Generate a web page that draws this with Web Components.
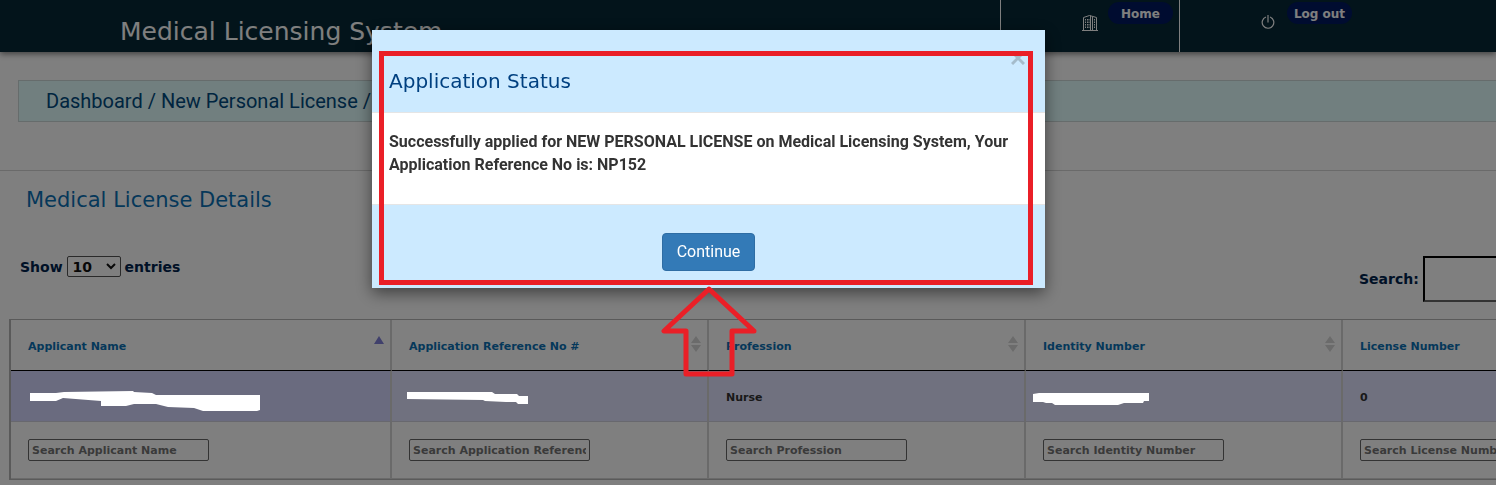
<!DOCTYPE html>
<html lang="en">
<head>
<meta charset="utf-8">
<title>Medical Licensing System</title>
<style>
    body {
        margin: 0;
        background: #fff;
        font-family: "DejaVu Sans", Verdana, sans-serif;
        overflow: hidden;
    }
</style>
</head>
<body>
<app-header heading="Medical Licensing System">
    <nav-item icon="building" href="#home">Home</nav-item>
    <nav-item icon="power" href="#logout">Log out</nav-item>
</app-header>
<bread-crumb>Dashboard / New Personal License /</bread-crumb>
<license-panel heading="Medical License Details">
    <table-toolbar></table-toolbar>
    <license-table></license-table>
</license-panel>
<status-modal heading="Application Status" action="Continue">
    Successfully applied for NEW PERSONAL LICENSE on Medical Licensing System, Your Application Reference No is: NP152
</status-modal>

<script>
class BaseElement extends HTMLElement {
    connectedCallback() {
        if(this.shadowRoot) return
        this.attachShadow({mode: "open"})
        const template = document.createElement("template")
        template.innerHTML = `<style>* { box-sizing: border-box; } ${this.getStyles()}</style>${this.getMarkup()}`
        this.shadowRoot.appendChild(template.content.cloneNode(true))
    }
    attr(name) {
        return this.getAttribute(name) || ""
    }
}

class AppHeader extends BaseElement {
    getMarkup() {
        return `
        <header>
            <h1>${this.attr("heading")}</h1>
            <nav><slot></slot></nav>
        </header>
        `
    }
    getStyles() {
        return `
        :host { display: block; }
        header {
            display: flex;
            justify-content: space-between;
            height: 52px;
            background: #062836;
            box-shadow: 0 2px 6px rgba(0, 0, 0, .5);
        }
        h1 {
            margin: 0;
            padding: 16px 0 0 120px;
            font-size: 25px;
            line-height: 32px;
            font-weight: 400;
            color: #fff;
            white-space: nowrap;
        }
        nav { display: flex; }
        ::slotted(nav-item) { width: 179px; border-left: 1px solid #fff; }
        ::slotted(nav-item:last-child) { width: 317px; }
        `
    }
}

const icons = {
    building: `<svg width="16" height="17" viewBox="0 0 16 17" fill="none" stroke="#fff">
        <path d="M0 16.500h16M1.500 16.500V3.500l6-2 7 2v13M8.500 1.500v15M10.500 2.500v14" />
        <path d="M3.500 5v9M5.500 5v9M7 5v9M12.500 5v9" stroke-dasharray="1.500 1" />
    </svg>`,
    power: `<svg width="14" height="16" viewBox="0 0 14 16" fill="none" stroke="#fff" stroke-width="1.200">
        <path d="M5 3a5.800 5.800 0 1 0 4 0M7 1v7.500"/>
    </svg>`
}

class NavItem extends BaseElement {
    getMarkup() {
        return `<a href="${this.attr("href")}">${icons[this.attr("icon")]}<span><slot></slot></span></a>`
    }
    getStyles() {
        return `
        :host { display: block; box-sizing: border-box; }
        a {
            display: grid;
            grid-template-columns: 26px 65px;
            padding: 2px 0 0 81px;
            text-decoration: none;
        }
        svg { margin-top: 12px; }
        span {
            height: 22px;
            border-radius: 11px;
            background: #001860;
            color: #fff;
            font-size: 12px;
            line-height: 24px;
            font-weight: 700;
            text-align: center;
            white-space: nowrap;
        }
        `
    }
}

class BreadCrumb extends BaseElement {
    getMarkup() {
        return `<nav><slot></slot></nav>`
    }
    getStyles() {
        return `
        :host {
            display: block;
            padding: 28px 0 48px 18px;
            border-bottom: 1px solid #d4d4d4;
        }
        nav {
            padding: 0 27px;
            border: 1px solid #ccd8d8;
            border-right: 0;
            background: #e2fefe;
            font-family: Roboto, sans-serif;
            font-size: 20px;
            line-height: 40px;
            color: #004a80;
        }
        `
    }
}

class LicensePanel extends BaseElement {
    getMarkup() {
        return `<h2>${this.attr("heading")}</h2><slot></slot>`
    }
    getStyles() {
        return `
        :host { display: block; padding-left: 9px; overflow: hidden; }
        h2 {
            margin: 0;
            padding: 14px 17px 40px;
            font-size: 21px;
            line-height: 31px;
            font-weight: 400;
            color: #0a70b4;
        }
        `
    }
}

class TableToolbar extends BaseElement {
    getMarkup() {
        return `
        <label class="length">Show
            <span class="pick">
                <select><option>10</option><option>25</option></select>
                <svg width="10" height="7" viewBox="0 0 10 7" fill="none" stroke="#111" stroke-width="2"><path d="M1 1l4 4 4-4"/></svg>
            </span>
            entries
        </label>
        <label class="search">Search: <input type="search"></label>
        `
    }
    getStyles() {
        return `
        :host {
            display: flex;
            justify-content: space-between;
            align-items: flex-start;
            width: 1650px;
            padding-left: 11px;
            margin-bottom: 17px;
            box-sizing: border-box;
            font-size: 14px;
            font-weight: 700;
            color: #00224d;
        }
        label { display: flex; align-items: center; }
        .length { gap: 4px; }
        .search { gap: 4px; width: 300px; }
        .pick { display: grid; align-items: center; }
        select, .pick svg { grid-area: 1 / 1; }
        .pick svg { justify-self: end; margin-right: 5px; pointer-events: none; }
        select {
            appearance: none;
            width: 54px;
            height: 21px;
            padding: 0 5px;
            border: 1px solid #555;
            border-radius: 2px;
            background: #fff;
            font: inherit;
            color: #111;
        }
        .search input {
            flex: 1;
            min-width: 0;
            height: 46px;
            border: 2px inset #666;
            border-color: #222 #666 #666 #222;
            background: #fff;
        }
        `
    }
}

class LicenseTable extends BaseElement {
    getMarkup() {
        const columns = ["Applicant Name", "Application Reference No #", "Profession", "Identity Number", "License Number"]
        const row = [
            this.getMark("M2 3 28 3 36 2 105 1 106 2 124 3 128 5 232 5 232 20 229 21 175 21 166 18 140 17 128 14 106 14 98 16 73 16 73 11 35 8 28 11 2 11z"),
            this.getMark("M-2 2 83 2 86 4 108 4 110 6 119 6 119 14 109 14 107 12 97 12 76 11 74 10-2 9z"),
            "Nurse",
            this.getMark("M-10 4-4 3 106 3 106 11 101 11 100 13 81 13 75 15 12 15 9 13 3 13 0 12-10 12z"),
            "0"
        ]
        return `
        <table>
            <colgroup><col class="name"><col><col><col><col></colgroup>
            <thead><tr>${columns.map((name, i) => `<th scope="col"><div><span>${name}</span>${this.getArrows(i === 0)}</div></th>`).join("")}</tr></thead>
            <tbody><tr>${row.map(cell => `<td>${cell}</td>`).join("")}</tr></tbody>
            <tfoot><tr>${columns.map(name => `<td><input type="text" aria-label="Search ${name}" placeholder="Search ${name}"></td>`).join("")}</tr></tfoot>
        </table>
        `
    }
    getArrows(sorted) {
        if(sorted) {
            return `<svg width="10" height="18" viewBox="0 0 10 18"><path d="M0 9 5 1l5 8z" fill="#8080d8"/></svg>`
        }
        return `<svg width="10" height="18" viewBox="0 0 10 18" fill="#d6d6d6"><path d="M0 8 5 1l5 7zM0 10h10l-5 7z"/></svg>`
    }
    // brush stroke that hides a private value
    getMark(path) {
        return `<svg class="mark" width="240" height="14" viewBox="0 0 240 14"><path d="${path}" fill="#fff"/></svg>`
    }
    getStyles() {
        return `
        :host { display: block; }
        table {
            table-layout: fixed;
            width: 1650px;
            border: 1px solid #b4b4b4;
            border-left-width: 2px;
            border-spacing: 0;
            font-size: 11px;
            font-weight: 700;
        }
        col { width: 317px; }
        col.name { width: 381px; }
        th, td {
            padding: 0 17px;
            border-right: 2px solid #d4d4d4;
            text-align: left;
        }
        th {
            height: 51px;
            padding: 2px 6px 0 17px;
            border-bottom: 1px solid #000;
            color: #0a70b4;
        }
        th div { display: flex; align-items: center; justify-content: space-between; }
        th svg { margin-bottom: 4px; }
        tbody td {
            height: 51px;
            padding-top: 2px;
            background: #e0e2ff;
            border-bottom: 1px solid #d0d0dd;
            color: #333;
        }
        tbody td:first-child { background: #d4d6ff; }
        tfoot td { height: 57px; border-bottom: 1px solid #d4d4d4; }
        .mark {
            display: block;
            position: relative;
            z-index: 20;
            overflow: visible;
        }
        input {
            display: block;
            width: 181px;
            height: 22px;
            padding: 0 3px;
            border: 1px solid #666;
            border-radius: 2px;
            background: #fff;
            font: inherit;
        }
        input::placeholder { color: #757575; }
        `
    }
}

class StatusModal extends BaseElement {
    getMarkup() {
        return `
        <div class="dialog" role="dialog" aria-labelledby="title">
            <header>
                <h4 id="title">${this.attr("heading")}</h4>
                <button class="close" aria-label="Close"><svg width="14" height="14" viewBox="0 0 14 14" stroke="#a5bccb" stroke-width="3"><path d="M1 1l12 12M13 1L1 13"/></svg></button>
            </header>
            <p><slot></slot></p>
            <footer><button class="continue">${this.attr("action")}</button></footer>
            <div class="frame"></div>
            <svg class="arrow" width="98" height="92" viewBox="0 0 98 92" fill="none" stroke="#ea1f27" stroke-width="5" stroke-linejoin="round">
                <path d="M49 3 4 45h22v43h46V45h22z"/>
            </svg>
        </div>
        `
    }
    getStyles() {
        return `
        :host {
            display: flex;
            position: fixed;
            inset: 0;
            z-index: 10;
            justify-content: center;
            align-items: flex-start;
            padding: 30px 79px 0 0;
            box-sizing: border-box;
            background: rgba(0, 0, 0, .5);
        }
        .dialog {
            position: relative;
            width: 673px;
            background: #cceaff;
            box-shadow: 0 5px 15px rgba(0, 0, 0, .5);
        }
        header {
            display: flex;
            justify-content: space-between;
            align-items: flex-start;
            padding: 21px 20px 16px 17px;
            border-bottom: 1px solid #e5e5e5;
        }
        h4 {
            margin: 0;
            padding-top: 15px;
            font-size: 20px;
            line-height: 30px;
            font-weight: 400;
            color: #004080;
        }
        .close { padding: 0; border: 0; background: none; }
        .close svg { display: block; }
        p {
            margin: 0;
            padding: 17px 17px 28px;
            background: #fff;
            font: 700 16px/23px Roboto, sans-serif;
            color: #333;
        }
        footer {
            display: flex;
            justify-content: center;
            padding: 28px 0 17px;
            border-top: 1px solid #e5e5e5;
        }
        .continue {
            height: 38px;
            padding: 0 14px;
            border: 1px solid #2e6da4;
            border-radius: 4px;
            background: #337ab7;
            font: 400 16px/24px Roboto, sans-serif;
            color: #fff;
        }
        .frame {
            position: absolute;
            inset: 21px 12px 3px 7px;
            border: 5px solid #ea1f27;
            pointer-events: none;
        }
        .arrow {
            position: absolute;
            top: 100%;
            left: 50%;
            margin: -2px 0 0 -49px;
        }
        `
    }
}

customElements.define("app-header", AppHeader)
customElements.define("nav-item", NavItem)
customElements.define("bread-crumb", BreadCrumb)
customElements.define("license-panel", LicensePanel)
customElements.define("table-toolbar", TableToolbar)
customElements.define("license-table", LicenseTable)
customElements.define("status-modal", StatusModal)
</script>
</body>
</html>
